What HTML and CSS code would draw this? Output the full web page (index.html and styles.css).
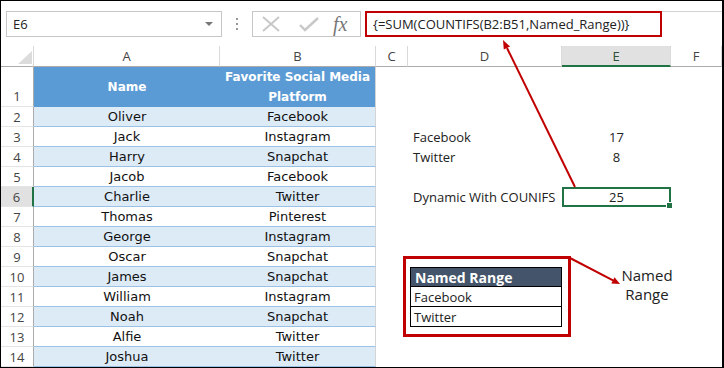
FILE: index.html
```html
<!DOCTYPE html>
<html lang="en">
<head>
    <meta charset="UTF-8">
    <title>Named Range COUNTIFS</title>
    <link rel="stylesheet" href="styles.css">
</head>
<body>
<div class="frame">
    <div class="toolbar">
        <div class="namebox">
            <span>E6</span>
            <svg class="caret" width="8" height="4" viewBox="0 0 8 4"><polygon points="0,0 8,0 4,4" fill="#777"/></svg>
        </div>
        <div class="dots">
            <svg width="4" height="12" viewBox="0 0 4 12">
                <rect x="1" y="0" width="2" height="2" fill="#999"/>
                <rect x="1" y="5" width="2" height="2" fill="#999"/>
                <rect x="1" y="10" width="2" height="2" fill="#999"/>
            </svg>
        </div>
        <div class="buttons">
            <svg width="18" height="16" viewBox="0 0 18 16"><path d="M1 1 L17 15 M17 1 L1 15" stroke="#c8c8c8" stroke-width="2" fill="none"/></svg>
            <svg width="20" height="16" viewBox="0 0 20 16"><path d="M1 9 L6 14 L19 2" stroke="#c8c8c8" stroke-width="2.4" fill="none"/></svg>
            <span class="fx">fx</span>
        </div>
        <div class="formula">{=SUM(COUNTIFS(B2:B51,Named_Range))}</div>
        <div class="formula-rest"></div>
    </div>

    <div class="sheet">
        <!-- column headers -->
        <div class="hd corner"><svg width="14" height="13" viewBox="0 0 14 13"><polygon points="14,0 14,13 0,13" fill="#dcdcdc"/></svg></div>
        <div class="hd">A</div>
        <div class="hd">B</div>
        <div class="hd">C</div>
        <div class="hd">D</div>
        <div class="hd sel">E</div>
        <div class="hd">F</div>

        <!-- row 1 -->
        <div class="rn first">1</div>
        <div class="th">Name</div>
        <div class="th col-b">Favorite Social Media Platform</div>
        <div class="c"></div><div class="c"></div><div class="c"></div><div class="c"></div>

        <div class="rn">2</div>
        <div class="t band">Oliver</div><div class="t band col-b">Facebook</div>
        <div class="c"></div><div class="c"></div><div class="c"></div><div class="c"></div>

        <div class="rn">3</div>
        <div class="t">Jack</div><div class="t col-b">Instagram</div>
        <div class="c"></div><div class="c label">Facebook</div><div class="c num">17</div><div class="c"></div>

        <div class="rn">4</div>
        <div class="t band">Harry</div><div class="t band col-b">Snapchat</div>
        <div class="c"></div><div class="c label">Twitter</div><div class="c num">8</div><div class="c"></div>

        <div class="rn">5</div>
        <div class="t">Jacob</div><div class="t col-b">Facebook</div>
        <div class="c"></div><div class="c"></div><div class="c"></div><div class="c"></div>

        <div class="rn sel">6</div>
        <div class="t band">Charlie</div><div class="t band col-b">Twitter</div>
        <div class="c"></div><div class="c label">Dynamic With COUNIFS</div><div class="c num active">25</div><div class="c"></div>

        <div class="rn">7</div>
        <div class="t">Thomas</div><div class="t col-b">Pinterest</div>
        <div class="c"></div><div class="c"></div><div class="c"></div><div class="c"></div>

        <div class="rn">8</div>
        <div class="t band">George</div><div class="t band col-b">Instagram</div>
        <div class="c"></div><div class="c"></div><div class="c"></div><div class="c"></div>

        <div class="rn">9</div>
        <div class="t">Oscar</div><div class="t col-b">Snapchat</div>
        <div class="c"></div><div class="c"></div><div class="c"></div><div class="c"></div>

        <div class="rn">10</div>
        <div class="t band">James</div><div class="t band col-b">Snapchat</div>
        <div class="c"></div><div class="c nr-head">Named Range</div><div class="c"></div><div class="c"></div>

        <div class="rn">11</div>
        <div class="t">William</div><div class="t col-b">Instagram</div>
        <div class="c"></div><div class="c nr-row">Facebook</div><div class="c"></div><div class="c"></div>

        <div class="rn">12</div>
        <div class="t band">Noah</div><div class="t band col-b">Snapchat</div>
        <div class="c"></div><div class="c nr-row">Twitter</div><div class="c"></div><div class="c"></div>

        <div class="rn">13</div>
        <div class="t">Alfie</div><div class="t col-b">Twitter</div>
        <div class="c"></div><div class="c"></div><div class="c"></div><div class="c"></div>

        <div class="rn">14</div>
        <div class="t band">Joshua</div><div class="t band col-b">Twitter</div>
        <div class="c"></div><div class="c"></div><div class="c"></div><div class="c"></div>
    </div>

    <!-- callouts drawn over the sheet -->
    <div class="callout-box"></div>
    <div class="callout-text">Named<br>Range</div>
    <svg class="arrows" width="724" height="368" viewBox="0 0 724 368">
        <line x1="575" y1="187" x2="507" y2="48" stroke="#c00000" stroke-width="2"/>
        <polygon points="503,40 510.1,46.5 503.8,49.6" fill="#c00000"/>
        <line x1="570" y1="258" x2="613" y2="280.3" stroke="#c00000" stroke-width="2"/>
        <polygon points="620,284 611.3,283.4 614.5,277.2" fill="#c00000"/>
    </svg>
</div>
</body>
</html>
```

FILE: styles.css
```css
html, body {
    margin: 0;
    padding: 0;
    background-color: #fff;
    overflow: hidden;
}

body {
    font-family: "Open Sans", sans-serif;
    color: #222;
}

.frame {
    position: relative;
    width: 724px;
    height: 368px;
    box-sizing: border-box;
    border: 1px solid #000;
    border-right-width: 2px;
    overflow: hidden;
}

/* formula bar */
.toolbar {
    height: 45px;
    box-sizing: border-box;
    padding-top: 10px;
    display: flex;
    align-items: flex-start;
}

.namebox {
    margin-left: 5px;
    width: 216px;
    height: 26px;
    box-sizing: border-box;
    border: 1px solid #c6c6c6;
    display: flex;
    align-items: center;
    justify-content: space-between;
    padding: 0 8px 0 6px;
    font-size: 13px;
    color: #222;
}

.dots {
    width: 30px;
    height: 26px;
    display: flex;
    align-items: center;
    justify-content: center;
}

.buttons {
    width: 109px;
    height: 26px;
    box-sizing: border-box;
    border: 1px solid #c6c6c6;
    display: flex;
    align-items: center;
    padding-left: 9px;
    gap: 19px;
}

.fx {
    font-family: "Liberation Serif", serif;
    font-style: italic;
    font-size: 20px;
    color: #777;
    margin-left: -5px;
    line-height: 1;
}

.formula {
    margin-left: 4px;
    width: 297px;
    height: 26px;
    box-sizing: border-box;
    border: 2px solid #c00000;
    padding-left: 6px;
    display: flex;
    align-items: center;
    font-size: 13px;
    color: #222;
    white-space: nowrap;
}

.formula-rest {
    flex: 1;
    height: 26px;
    border-top: 1px solid #d4d4d4;
}

/* grid */
.sheet {
    display: grid;
    grid-template-columns: 33px 186px 156px 32px 154px 109px 1fr;
    grid-template-rows: 21px 40px repeat(13, 20px);
}

.sheet > div {
    box-sizing: border-box;
    display: flex;
    align-items: center;
    white-space: nowrap;
    overflow: hidden;
}

.hd {
    justify-content: center;
    border-right: 1px solid #d9d9d9;
    border-bottom: 1px solid #ababab;
    font-size: 13px;
    color: #444;
}

.hd.corner {
    justify-content: flex-end;
    align-items: flex-end;
    padding: 0 1px 2px 0;
}

.hd.sel {
    background-color: #e1e1e1;
    border-bottom: 2px solid #217346;
    color: #2f4f38;
}

.rn {
    justify-content: center;
    border-right: 1px solid #ababab;
    border-bottom: 1px solid #e4e4e4;
    font-size: 13px;
    color: #444;
}

.rn.first {
    align-items: flex-end;
    padding-bottom: 1px;
}

.rn.sel {
    background-color: #e1e1e1;
    border-right: 2px solid #217346;
}

.th {
    background-color: #5b9bd5;
    color: #fff;
    font-family: Verdana, "DejaVu Sans", sans-serif;
    font-weight: bold;
    font-size: 12px;
    justify-content: center;
    text-align: center;
    line-height: 20px;
}

.sheet > .th.col-b {
    white-space: normal;
}

.t {
    justify-content: center;
    border-bottom: 1px solid #9bc2e6;
    font-family: Verdana, "DejaVu Sans", sans-serif;
    font-size: 13px;
    color: #111;
}

.band {
    background-color: #ddebf7;
}

.col-b {
    border-right: 1px solid #d4d4d4;
}

.label {
    padding-left: 5px;
    font-size: 13px;
}

.num {
    justify-content: center;
    font-size: 13px;
}

.num.active {
    position: relative;
    overflow: visible !important;
    border: 2px solid #217346;
}

.num.active::after {
    content: "";
    position: absolute;
    right: -4px;
    bottom: -4px;
    width: 5px;
    height: 5px;
    background-color: #217346;
    border: 1px solid #fff;
}

/* named range table */
.nr-head {
    margin-left: 2px;
    background-color: #44546a;
    color: #fff;
    font-weight: bold;
    font-size: 14px;
    padding-left: 4px;
    border: 1px solid #000;
}

.nr-row {
    margin-left: 2px;
    padding-left: 3px;
    font-size: 13px;
    border: 1px solid #000;
    border-top: none;
}

/* overlays */
.callout-box {
    position: absolute;
    left: 402px;
    top: 255px;
    width: 168px;
    height: 81px;
    box-sizing: border-box;
    border: 3px solid #c00000;
}

.callout-text {
    position: absolute;
    left: 609px;
    top: 265px;
    width: 74px;
    text-align: center;
    font-size: 15px;
    line-height: 19px;
    color: #222;
}

.arrows {
    position: absolute;
    left: -1px;
    top: -1px;
    pointer-events: none;
}
```
